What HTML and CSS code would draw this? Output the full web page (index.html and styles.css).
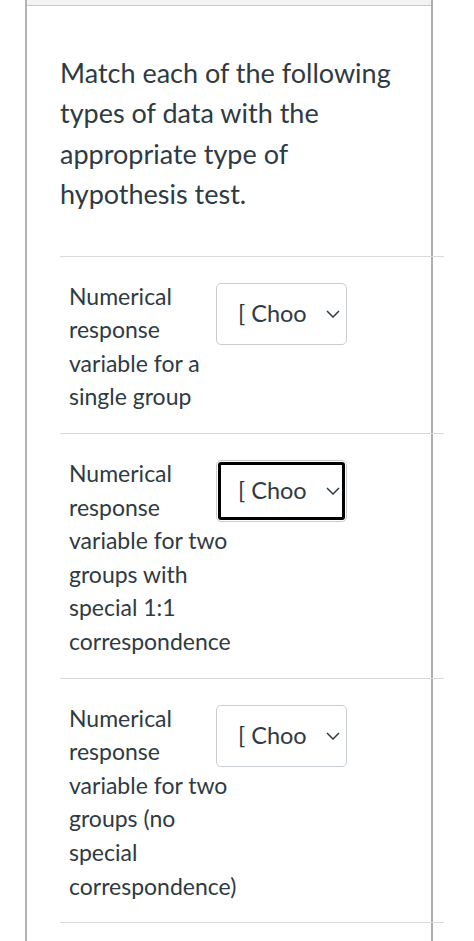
FILE: index.html
```html
<!DOCTYPE html>
<html lang="en">
<head>
<meta charset="utf-8">
<title>Matching question</title>
<link rel="stylesheet" href="styles.css">
</head>
<body>
<div class="frame">
  <div class="strip"></div>
  <div class="content">
    <p class="question">Match each of the following types of data with the appropriate type of hypothesis test.</p>
    <div class="list">
      <div class="row">
        <div class="label">Numerical response variable for a single group</div>
        <div class="select">
          <span class="value">[ Choo</span>
          <svg class="chev" width="14" height="8" viewBox="0 0 14 8"><path d="M1 1 L7 7 L13 1" fill="none" stroke="#2d3b45" stroke-width="1.5"/></svg>
        </div>
      </div>
      <div class="row">
        <div class="label">Numerical response variable for two groups with special 1:1 correspondence</div>
        <div class="select focused">
          <span class="value">[ Choo</span>
          <svg class="chev" width="14" height="8" viewBox="0 0 14 8"><path d="M1 1 L7 7 L13 1" fill="none" stroke="#2d3b45" stroke-width="1.5"/></svg>
        </div>
      </div>
      <div class="row">
        <div class="label">Numerical response variable for two groups (no special correspondence)</div>
        <div class="select">
          <span class="value">[ Choo</span>
          <svg class="chev" width="14" height="8" viewBox="0 0 14 8"><path d="M1 1 L7 7 L13 1" fill="none" stroke="#2d3b45" stroke-width="1.5"/></svg>
        </div>
      </div>
    </div>
  </div>
</div>
</body>
</html>
```

FILE: styles.css
```css
html, body {
  margin: 0;
  padding: 0;
  background: #ffffff;
}

body {
  font-family: Lato, "Open Sans", "Liberation Sans", sans-serif;
  color: #2f3a42;
}

.frame {
  margin-left: 25px;
  width: 404px;
  min-height: 941px;
  border-left: 2px solid #b3b3b3;
  border-right: 2px solid #adadad;
}

.strip {
  height: 5px;
  background: #f3f3f3;
  border-bottom: 1px solid #c9c9c9;
}

.content {
  padding-left: 33px;
}

.question {
  margin: 47px 0 0 0;
  max-width: 345px;
  font-size: 27px;
  line-height: 40.4px;
}

.list {
  margin-top: 41px;
  width: 384px;
  border-top: 1px solid #d9d9d9;
}

.row {
  display: grid;
  grid-template-columns: 147px 28px 103px;
  padding: 23px 0 19px 9px;
  border-bottom: 1px solid #d9d9d9;
}

.label {
  grid-column: 1 / 3;
  grid-row: 1;
  font-size: 23px;
  line-height: 33.6px;
}

.select {
  grid-column: 2 / 4;
  grid-row: 1;
  align-self: start;
  margin-top: 3px;
  height: 62px;
  box-sizing: border-box;
  border: 1px solid #c7cdd1;
  border-radius: 5px;
  background: #fff;
  display: flex;
  align-items: center;
  padding-left: 21px;
  padding-right: 6px;
  font-size: 23.5px;
  white-space: nowrap;
  overflow: hidden;
}

.select .value {
  flex: 1;
  margin-top: -2px;
}

.select .chev {
  flex: none;
}

.select.focused {
  outline: 3px solid #000;
  outline-offset: -5px;
}
```
